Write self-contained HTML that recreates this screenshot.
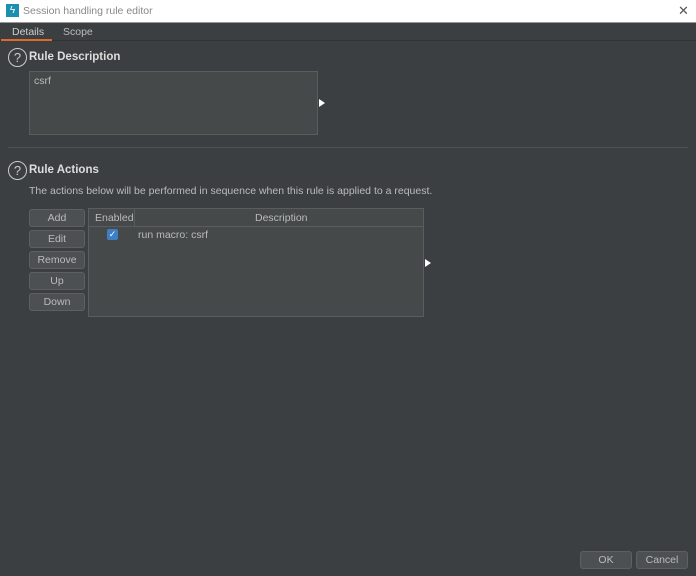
<!DOCTYPE html><html><head><style>
body{margin:0;width:696px;height:576px;background:#3c3f41;font-family:"Liberation Sans",sans-serif;font-size:10.5px;color:#bbb;position:relative;overflow:hidden}
.a{position:absolute}
.btn{position:absolute;background:#4c5052;border:1px solid #5e6060;border-radius:3px;color:#bbb;text-align:center;box-sizing:border-box;line-height:16px;font-size:10.5px}
.q{position:absolute;width:17px;height:17px;border:1.5px solid #ccc;border-radius:50%;color:#ccc;font-size:13px;text-align:center;line-height:17px;box-sizing:content-box}
h{position:absolute;font-weight:bold;color:#ddd;font-size:11.5px}
</style></head><body>
<div class="a" style="left:0;top:0;width:696px;height:22px;background:#fff;border-bottom:1px solid #999"></div>
<div class="a" style="left:6px;top:4px;width:13px;height:13px;background:#1b8fb0;color:#fff;font-size:10px;line-height:13px;text-align:center">ϟ</div>
<div class="a" style="left:23px;top:5px;color:#888;font-size:10.5px">Session handling rule editor</div>
<div class="a" style="left:678px;top:3px;color:#555;font-size:13px">✕</div>
<div class="a" style="left:0;top:40px;width:696px;height:1px;background:#323232"></div>
<div class="a" style="left:12px;top:26px;color:#ccc">Details</div>
<div class="a" style="left:63px;top:26px;color:#bbb">Scope</div>
<div class="a" style="left:1px;top:39px;width:51px;height:2px;background:#e06a2a"></div>
<div class="q" style="left:8px;top:48px">?</div>
<h style="left:29px;top:51px">Rule Description</h>
<div class="a" style="left:29px;top:71px;width:289px;height:64px;background:#45494a;border:1px solid #5a5d5f;box-sizing:border-box"></div>
<div class="a" style="left:34px;top:75px">csrf</div>
<div class="a" style="left:319px;top:99px;width:0;height:0;border-left:6px solid #fff;border-top:4px solid transparent;border-bottom:4px solid transparent"></div>
<div class="a" style="left:8px;top:147px;width:680px;height:1px;background:#4f5254"></div>
<div class="q" style="left:8px;top:161px">?</div>
<h style="left:29px;top:164px">Rule Actions</h>
<div class="a" style="left:29px;top:185px">The actions below will be performed in sequence when this rule is applied to a request.</div>
<div class="btn" style="left:29px;top:209px;width:56px;height:18px">Add</div>
<div class="btn" style="left:29px;top:230px;width:56px;height:18px">Edit</div>
<div class="btn" style="left:29px;top:251px;width:56px;height:18px">Remove</div>
<div class="btn" style="left:29px;top:272px;width:56px;height:18px">Up</div>
<div class="btn" style="left:29px;top:293px;width:56px;height:18px">Down</div>
<div class="a" style="left:88px;top:208px;width:336px;height:109px;background:#45494a;border:1px solid #5a5d5f;box-sizing:border-box"></div>
<div class="a" style="left:89px;top:226px;width:334px;height:1px;background:#5a5d5f"></div>
<div class="a" style="left:134px;top:209px;width:1px;height:17px;background:#5a5d5f"></div>
<div class="a" style="left:95px;top:212px">Enabled</div>
<div class="a" style="left:255px;top:212px">Description</div>
<div class="a" style="left:107px;top:229px;width:11px;height:11px;background:#3d7fc4;border-radius:2px;color:#fff;font-size:9px;line-height:11px;text-align:center">✓</div>
<div class="a" style="left:138px;top:229px">run macro: csrf</div>
<div class="a" style="left:425px;top:259px;width:0;height:0;border-left:6px solid #fff;border-top:4px solid transparent;border-bottom:4px solid transparent"></div>
<div class="btn" style="left:580px;top:551px;width:52px;height:18px">OK</div>
<div class="btn" style="left:636px;top:551px;width:52px;height:18px">Cancel</div>
</body></html>
